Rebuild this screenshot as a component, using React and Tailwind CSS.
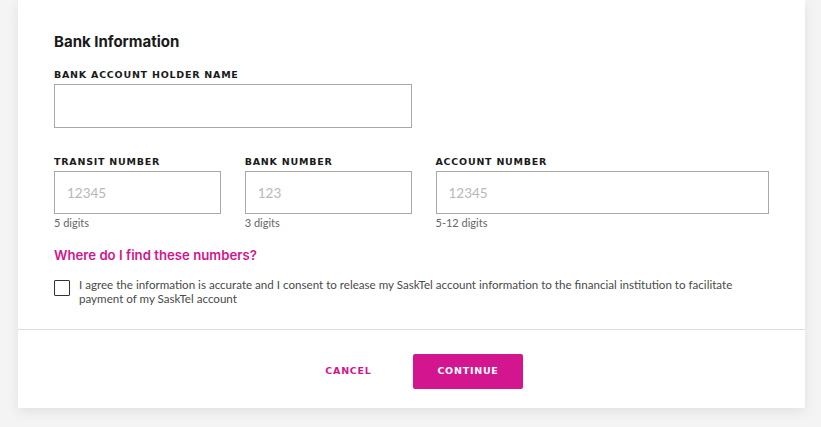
import React from "react";

const heading = { fontFamily: '"DejaVu Sans", "Noto Sans", sans-serif' };
const inter = { fontFamily: 'Inter, "Noto Sans", sans-serif' };
const body = { fontFamily: 'Lato, "Open Sans", sans-serif' };

function Label({ children }) {
  return (
    <div
      className="text-[9.5px] font-bold tracking-[0.08em] text-[#1a1a1a] leading-[12px] mb-[3px] uppercase"
      style={heading}
    >
      {children}
    </div>
  );
}

function Field({ label, placeholder, help, className = "" }) {
  return (
    <div className={className}>
      <Label>{label}</Label>
      <input
        placeholder={placeholder}
        className="block w-full h-[43px] border border-[#a9a9a9] px-[12px] text-[13.5px] text-[#333] placeholder:text-[#b8b8b8] outline-none"
        style={body}
      />
      {help && (
        <div className="text-[11px] leading-[16px] text-[#666] mt-[1px]" style={body}>
          {help}
        </div>
      )}
    </div>
  );
}

export default function App() {
  return (
    <div className="w-[821px] h-[427px] bg-[#f4f4f4] overflow-hidden">
      <div className="ml-[18px] w-[787px] h-[408px] bg-white shadow-[0_4px_12px_rgba(0,0,0,0.08)] flex flex-col">
        <div className="px-[36px] pt-[32px]">
          <h2 className="text-[15px] font-bold leading-[20px] text-[#1a1a1a]" style={inter}>
            Bank Information
          </h2>
          <div className="mt-[17px] grid grid-cols-[1fr_1fr_2fr] gap-x-[24px]">
            <div className="col-span-2">
              <Label>Bank Account Holder Name</Label>
              <input className="block w-full h-[44px] border border-[#a9a9a9] outline-none" />
            </div>
          </div>
          <div className="mt-[28px] grid grid-cols-[1fr_1fr_2fr] gap-x-[24px]">
            <Field label="Transit Number" placeholder="12345" help="5 digits" />
            <Field label="Bank Number" placeholder="123" help="3 digits" />
            <Field label="Account Number" placeholder="12345" help="5-12 digits" />
          </div>
          <a
            className="block mt-[14px] text-[13.2px] leading-[20px] font-semibold text-[#d3168f]"
            style={inter}
          >
            Where do I find these numbers?
          </a>
          <label className="mt-[15px] flex items-start gap-[9px]">
            <span className="w-[16px] h-[16px] border-[1.5px] border-[#333] rounded-[1px] shrink-0" />
            <span className="text-[11.6px] leading-[14px] text-[#4a4a4a] -mt-[2px] pr-[30px]" style={body}>
              I agree the information is accurate and I consent to release my SaskTel account information to the financial institution to facilitate payment of my SaskTel account
            </span>
          </label>
        </div>
        <div className="mt-[23px] border-t border-[#dcdcdc] flex justify-center items-center gap-[16px] pt-[24px]">
          <button
            className="w-[97px] text-[9.5px] font-bold tracking-[0.08em] text-[#d3168f] uppercase"
            style={heading}
          >
            Cancel
          </button>
          <button
            className="w-[110px] h-[35px] bg-[#d3168f] rounded-[2px] text-[9.5px] font-bold tracking-[0.08em] text-white uppercase"
            style={heading}
          >
            Continue
          </button>
        </div>
      </div>
    </div>
  );
}
